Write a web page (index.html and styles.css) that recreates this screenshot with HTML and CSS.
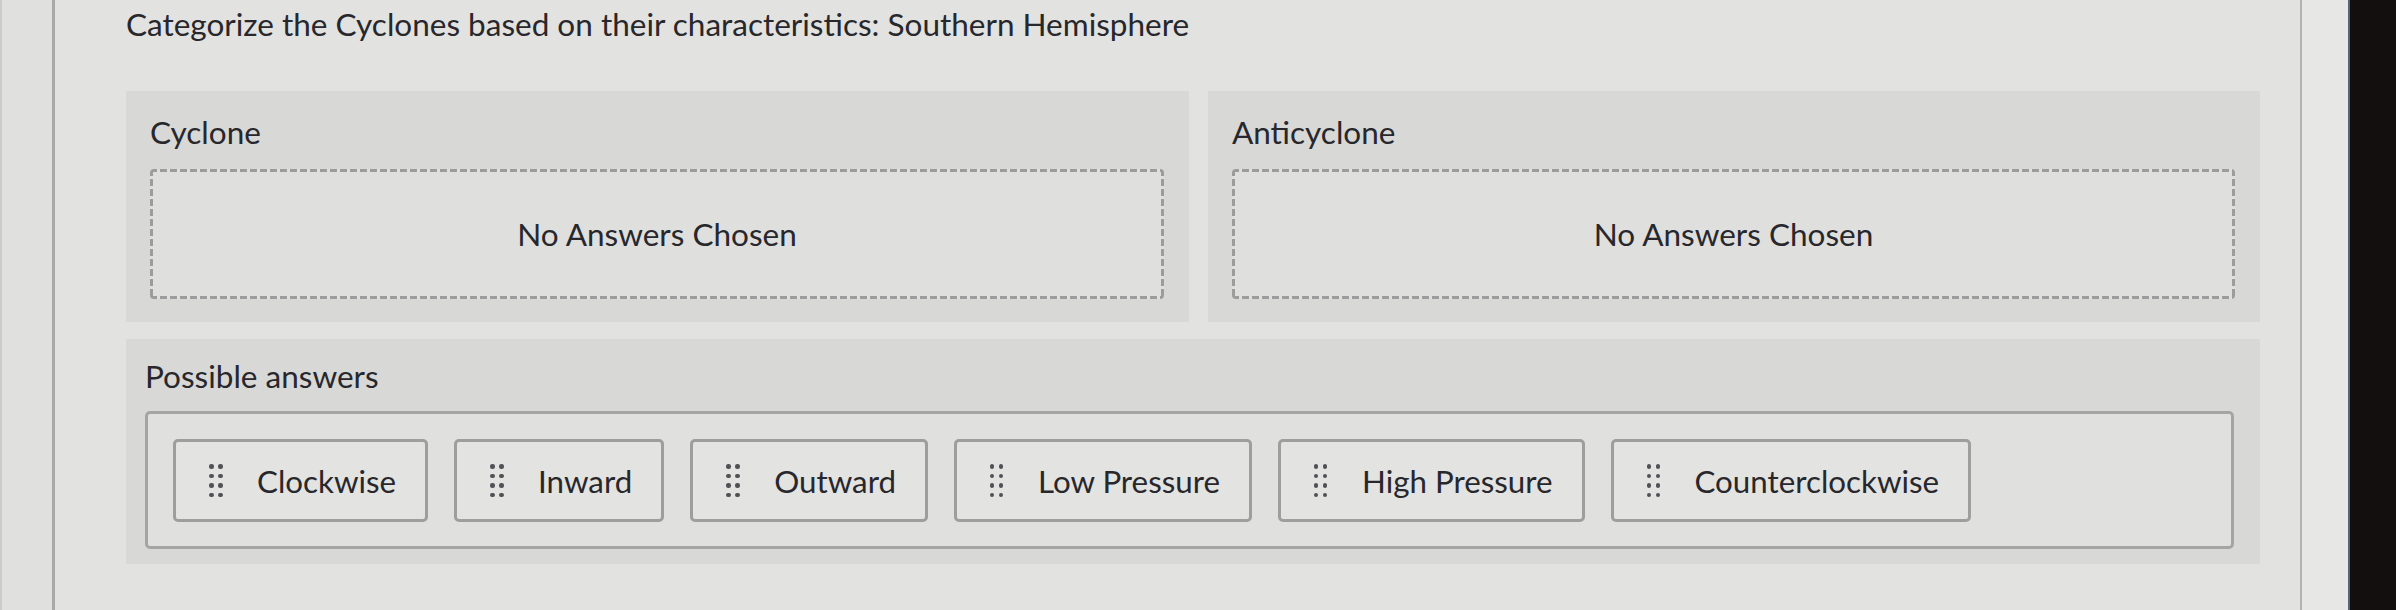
FILE: index.html
```html
<!DOCTYPE html>
<html lang="en">
<head>
<meta charset="utf-8">
<title>Categorize the Cyclones</title>
<link rel="stylesheet" href="styles.css">
</head>
<body>
<div class="screen">
  <div class="gutter"></div>
  <main class="page">
    <h1 class="title">Categorize the Cyclones based on their characteristics: Southern Hemisphere</h1>
    <div class="categories">
      <section class="panel cat">
        <h2 class="label">Cyclone</h2>
        <div class="dropzone">No Answers Chosen</div>
      </section>
      <section class="panel cat">
        <h2 class="label">Anticyclone</h2>
        <div class="dropzone">No Answers Chosen</div>
      </section>
    </div>
    <section class="panel answers">
      <h2 class="label">Possible answers</h2>
      <div class="bank">
        <div class="chip"><span class="grip"><i></i><i></i><i></i><i></i><i></i><i></i><i></i><i></i></span><span class="chip-text">Clockwise</span></div>
        <div class="chip"><span class="grip"><i></i><i></i><i></i><i></i><i></i><i></i><i></i><i></i></span><span class="chip-text">Inward</span></div>
        <div class="chip"><span class="grip"><i></i><i></i><i></i><i></i><i></i><i></i><i></i><i></i></span><span class="chip-text">Outward</span></div>
        <div class="chip"><span class="grip"><i></i><i></i><i></i><i></i><i></i><i></i><i></i><i></i></span><span class="chip-text">Low Pressure</span></div>
        <div class="chip"><span class="grip"><i></i><i></i><i></i><i></i><i></i><i></i><i></i><i></i></span><span class="chip-text">High Pressure</span></div>
        <div class="chip"><span class="grip"><i></i><i></i><i></i><i></i><i></i><i></i><i></i><i></i></span><span class="chip-text">Counterclockwise</span></div>
      </div>
    </section>
  </main>
  <div class="margin-right"></div>
  <div class="bezel"></div>
</div>
</body>
</html>
```
FILE: styles.css
```css
* { box-sizing: border-box; }

html, body {
  margin: 0;
  padding: 0;
  height: 100%;
}

body {
  font-family: Lato, "Open Sans", "Liberation Sans", sans-serif;
  color: #27272c;
  background: #e2e2e0;
  overflow: hidden;
}

.screen {
  display: flex;
  height: 610px;
  width: 2396px;
}

.gutter {
  width: 52px;
  flex: none;
  background: #e0e0de;
  border-left: 2px solid #cbcbca;
}

.page {
  flex: 1;
  background: #e2e2e0;
  border-left: 3px solid #a9a9a8;
  border-right: 2px solid #b3b3b2;
  padding: 5px 40px 0 71px;
}

.margin-right {
  width: 46px;
  flex: none;
  background: #e7e7e5;
}

.bezel {
  width: 48px;
  flex: none;
  background: #130f0e;
  border-left: 2px solid #55667a;
}

.title {
  margin: 0 0 48px;
  font-size: 31.5px;
  font-weight: 400;
  line-height: 38px;
}

.label {
  margin: 0;
  font-size: 31.5px;
  font-weight: 400;
  line-height: 38px;
}

.categories {
  display: grid;
  grid-template-columns: 1062fr 1051fr;
  column-gap: 19px;
  margin-bottom: 17px;
}

.panel {
  background: #d8d8d7;
}

.cat {
  padding: 22px 25px 23px 24px;
}

.dropzone {
  margin-top: 18px;
  height: 130px;
  display: flex;
  align-items: center;
  justify-content: center;
  font-size: 31.5px;
  background-color: #dfdfde;
  background-image:
    repeating-linear-gradient(90deg, #9c9c9c 0 7px, transparent 7px 10px),
    repeating-linear-gradient(90deg, #9c9c9c 0 7px, transparent 7px 10px),
    repeating-linear-gradient(180deg, #9c9c9c 0 7px, transparent 7px 10px),
    repeating-linear-gradient(180deg, #9c9c9c 0 7px, transparent 7px 10px);
  background-size: 100% 3px, 100% 3px, 3px 100%, 3px 100%;
  background-position: top left, bottom left, top left, top right;
  background-repeat: no-repeat;
  border-radius: 4px;
}

.answers {
  padding: 18px 26px 15px 19px;
}

.bank {
  margin-top: 16px;
  border: 3px solid #a5a5a4;
  border-radius: 5px;
  background: #e0e0df;
  padding: 25px 25px 24px 25px;
  display: flex;
  gap: 26px;
  align-items: center;
}

.chip {
  height: 83px;
  display: flex;
  align-items: center;
  border: 3px solid #9e9e9d;
  border-radius: 5px;
  background: #e3e3e2;
  padding: 0 29px 0 33px;
}

.grip {
  display: grid;
  grid-template-columns: 4px 4px;
  column-gap: 5px;
  row-gap: 5px;
  width: 14px;
  margin-right: 34px;
}

.grip i {
  display: block;
  width: 4.5px;
  height: 4.5px;
  border-radius: 50%;
  background: #505055;
}

.chip-text {
  font-size: 31.3px;
  line-height: 38px;
  color: #27272c;
}
```
